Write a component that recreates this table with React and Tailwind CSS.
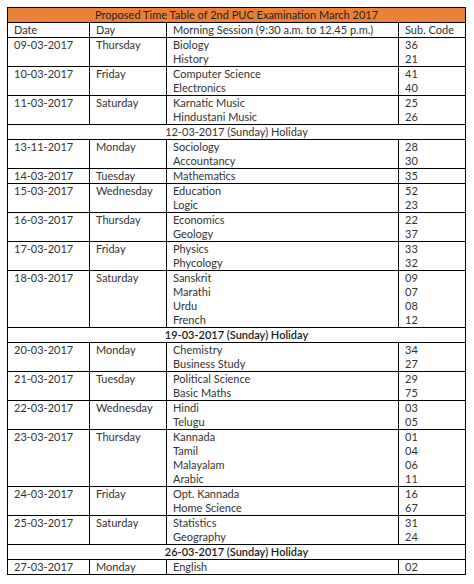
import React from "react";

const rows = [
  { d: "09-03-2017", day: "Thursday", s: ["Biology", "History"], c: ["36", "21"] },
  { d: "10-03-2017", day: "Friday", s: ["Computer Science", "Electronics"], c: ["41", "40"] },
  { d: "11-03-2017", day: "Saturday", s: ["Karnatic Music", "Hindustani Music"], c: ["25", "26"] },
  { h: "12-03-2017 (Sunday) Holiday", bold: false },
  { d: "13-11-2017", day: "Monday", s: ["Sociology", "Accountancy"], c: ["28", "30"] },
  { d: "14-03-2017", day: "Tuesday", s: ["Mathematics"], c: ["35"] },
  { d: "15-03-2017", day: "Wednesday", s: ["Education", "Logic"], c: ["52", "23"] },
  { d: "16-03-2017", day: "Thursday", s: ["Economics", "Geology"], c: ["22", "37"] },
  { d: "17-03-2017", day: "Friday", s: ["Physics", "Phycology"], c: ["33", "32"] },
  { d: "18-03-2017", day: "Saturday", s: ["Sanskrit", "Marathi", "Urdu", "French"], c: ["09", "07", "08", "12"] },
  { h: "19-03-2017 (Sunday) Holiday", bold: true },
  { d: "20-03-2017", day: "Monday", s: ["Chemistry", "Business Study"], c: ["34", "27"] },
  { d: "21-03-2017", day: "Tuesday", s: ["Political Science", "Basic Maths"], c: ["29", "75"] },
  { d: "22-03-2017", day: "Wednesday", s: ["Hindi", "Telugu"], c: ["03", "05"] },
  { d: "23-03-2017", day: "Thursday", s: ["Kannada", "Tamil", "Malayalam", "Arabic"], c: ["01", "04", "06", "11"] },
  { d: "24-03-2017", day: "Friday", s: ["Opt. Kannada", "Home Science"], c: ["16", "67"] },
  { d: "25-03-2017", day: "Saturday", s: ["Statistics", "Geography"], c: ["31", "24"] },
  { h: "26-03-2017 (Sunday) Holiday", bold: true },
  { d: "27-03-2017", day: "Monday", s: ["English"], c: ["02"] },
];

const cell = "border border-black align-top pl-[6px] pr-1 py-0";

export default function App() {
  return (
    <div
      className="w-[474px] h-[584px] bg-white pt-[7px] pl-[7px] text-[#333] text-[11px] leading-[14px]"
      style={{ fontFamily: "Lato, 'Open Sans', sans-serif" }}
    >
      <table className="border-collapse w-[458px] table-fixed">
        <colgroup>
          <col className="w-[82px]" />
          <col className="w-[77px]" />
          <col className="w-[232px]" />
          <col className="w-[67px]" />
        </colgroup>
        <tbody>
          <tr>
            <td colSpan={4} className="border border-black bg-[#e98139] text-center text-[#2b1e14] py-0">
              Proposed Time Table of 2nd PUC Examination March 2017
            </td>
          </tr>
          <tr>
            <td className={cell}>Date</td>
            <td className={cell}>Day</td>
            <td className={cell}>Morning Session (9:30 a.m. to 12.45 p.m.)</td>
            <td className={cell}>Sub. Code</td>
          </tr>
          {rows.map((r, i) =>
            r.h ? (
              <tr key={i}>
                <td
                  colSpan={4}
                  className={
                    "border border-black text-center py-0 " +
                    (r.bold ? "font-semibold text-[#1a1a1a]" : "")
                  }
                >
                  {r.h}
                </td>
              </tr>
            ) : (
              <tr key={i}>
                <td className={cell}>{r.d}</td>
                <td className={cell}>{r.day}</td>
                <td className={cell}>
                  {r.s.map((x, j) => (
                    <div key={j}>{x}</div>
                  ))}
                </td>
                <td className={cell}>
                  {r.c.map((x, j) => (
                    <div key={j}>{x}</div>
                  ))}
                </td>
              </tr>
            )
          )}
        </tbody>
      </table>
    </div>
  );
}
